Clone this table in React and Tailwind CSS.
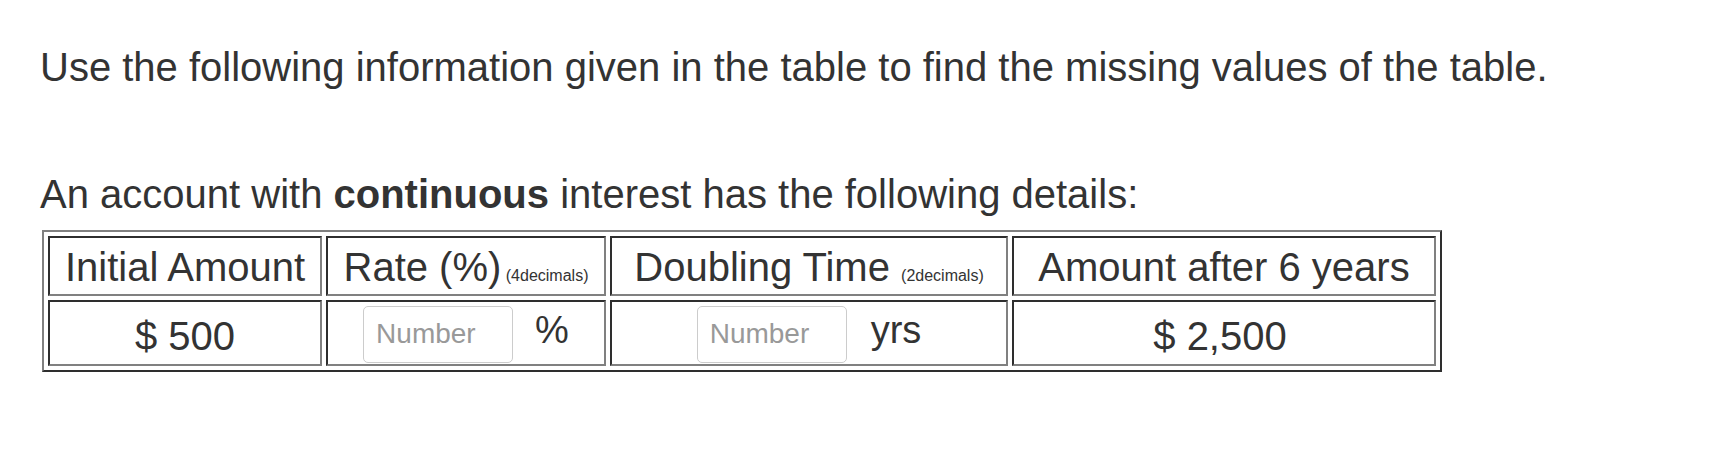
import React from "react";

const headCell =
  "h-[60px] border-2 border-t-[#2e2e2e] border-l-[#2e2e2e] border-r-[#808080] border-b-[#808080] text-center text-[40px] leading-[44px] pt-[7px] whitespace-nowrap";
const dataCell =
  "h-[66px] border-2 border-t-[#2e2e2e] border-l-[#2e2e2e] border-r-[#808080] border-b-[#808080] flex items-center justify-center whitespace-nowrap";

function NumInput() {
  return (
    <input
      type="text"
      placeholder="Number"
      className="w-[150px] h-[57px] rounded-[5px] border border-[#cccccc] bg-white px-[12px] text-[28px] text-[#333] placeholder:text-[#999] outline-none font-['Liberation_Sans',Arial,sans-serif]"
    />
  );
}

export default function App() {
  return (
    <div className="min-h-[470px] w-[1714px] bg-white text-[#333333] font-['Liberation_Sans',Arial,sans-serif] pl-[40px] pt-[44px]">
      <p className="text-[40px] leading-[46px]">
        Use the following information given in the table to find the missing values of the table.
      </p>
      <p className="mt-[81px] text-[40px] leading-[46px]">
        An account with <b className="font-bold">continuous</b> interest has the following details:
      </p>
      <div className="mt-[13px] ml-[2px] inline-block border-2 border-t-[#808080] border-l-[#808080] border-r-[#2e2e2e] border-b-[#2e2e2e] p-[4px]">
        <div className="grid grid-cols-[274px_280px_398px_424px] gap-[4px]">
          <div className={headCell}>Initial Amount</div>
          <div className={headCell}>
            Rate (%)<span className="text-[16px]"> (4decimals)</span>
          </div>
          <div className={headCell}>
            Doubling Time <span className="text-[16px]">(2decimals)</span>
          </div>
          <div className={headCell}>Amount after 6 years</div>

          <div className={dataCell}>
            <span className="text-[40px] leading-[44px] pt-[6px]">$ 500</span>
          </div>
          <div className={dataCell}>
            <div className="flex items-baseline pt-[2px]">
              <NumInput />
              <span className="ml-[22px] text-[38px] leading-[44px]">%</span>
            </div>
          </div>
          <div className={dataCell}>
            <div className="flex items-baseline pt-[2px]">
              <NumInput />
              <span className="ml-[24px] text-[38px] leading-[44px]">yrs</span>
            </div>
          </div>
          <div className={dataCell}>
            <span className="text-[40px] leading-[44px] pt-[6px] pr-[8px]">$ 2,500</span>
          </div>
        </div>
      </div>
    </div>
  );
}
